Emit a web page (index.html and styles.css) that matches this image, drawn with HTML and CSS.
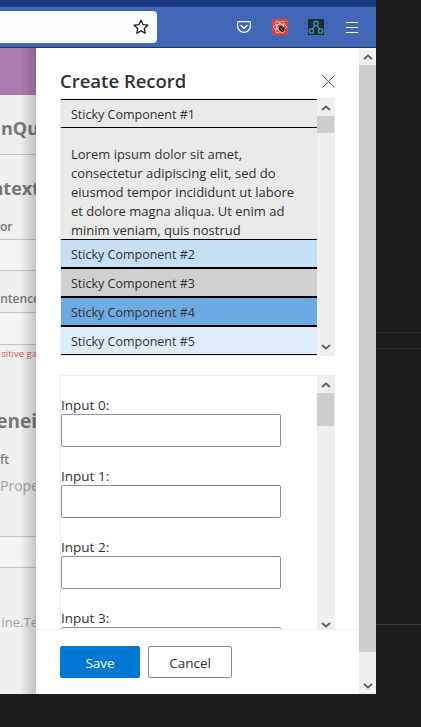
FILE: index.html
```html
<!DOCTYPE html>
<html lang="en">
<head>
<meta charset="utf-8">
<title>Create Record</title>
<link rel="stylesheet" href="styles.css">
</head>
<body>
<div class="screen">
  <div class="left">
    <div class="browser">
      <div class="tabstrip"></div>
      <div class="toolbar">
        <div class="urlbar">
          <svg class="star" viewBox="0 0 16 16" width="16" height="16"><path d="M8 1.2l2 4.400 4.800.6-3.500 3.300.9 4.800L8 11.900l-4.200 2.400.9-4.800L1.200 6.200 6 5.600z" fill="none" stroke="#1c1b22" stroke-width="1.300" stroke-linejoin="round"/></svg>
        </div>
        <svg class="pocket" viewBox="0 0 14 12" width="14" height="12"><path d="M1.500.6h11c.5 0 .9.400.9.900v3.700c0 3.300-2.900 6.200-6.400 6.200S.6 8.500.6 5.200V1.500c0-.5.400-.9.900-.9z" fill="none" stroke="#fff" stroke-width="1.200"/><path d="M4 4.500l3 2.800 3-2.800" fill="none" stroke="#fff" stroke-width="1.300" stroke-linecap="round"/></svg>
        <svg class="ext-red" viewBox="0 0 16 16" width="16" height="16"><rect width="16" height="16" fill="#d9473a"/><g fill="none" stroke="#fbe4e0" stroke-width="1" stroke-dasharray="1.400 .7"><ellipse cx="8" cy="8" rx="6.500" ry="2.800"/><ellipse cx="8" cy="8" rx="6.500" ry="2.800" transform="rotate(60 8 8)"/><ellipse cx="8" cy="8" rx="6.500" ry="2.800" transform="rotate(120 8 8)"/></g><ellipse cx="9.800" cy="10" rx="3" ry="2.600" fill="#1d1614" transform="rotate(35 9.800 10)"/><path d="M8 8.700l3 3.400M9.700 7.900l3 3.400" stroke="#d9847a" stroke-width=".6"/></svg>
        <svg class="ext-dark" viewBox="0 0 16 16" width="16" height="16"><rect width="16" height="16" fill="#1d2b38"/><g fill="none" stroke="#3f9bb0" stroke-width="1.300"><circle cx="8" cy="4.400" r="2.200"/><circle cx="3.400" cy="12" r="2.200"/><circle cx="12.600" cy="12" r="2.200"/><path d="M7 6.400l-2.500 3.700M9 6.400l2.500 3.700"/></g></svg>
        <div class="hamburger"><span></span><span></span><span></span></div>
      </div>
      <div class="viewport">
        <div class="backdrop">
          <div class="bd-hero"></div>
          <div class="bd-text bd-t1"><span class="bd-in">nQu</span></div>
          <div class="bd-rule"></div>
          <div class="bd-text bd-t2"><span class="bd-in">ntext</span></div>
          <div class="bd-text bd-t3">or</div>
          <div class="bd-field bd-f1"></div>
          <div class="bd-text bd-t4"><span class="bd-in">ntence</span></div>
          <div class="bd-field bd-f2"></div>
          <div class="bd-text bd-t5"><span class="bd-in">sitive ga</span></div>
          <div class="bd-text bd-t6"><span class="bd-in">enei</span></div>
          <div class="bd-text bd-t7">ft</div>
          <div class="bd-text bd-t8"><span class="bd-in">Prope</span></div>
          <div class="bd-field bd-f1"></div>
          <div class="bd-text bd-t9"><span class="bd-in">ine.Te</span></div>
        </div>
        <div class="panel">
          <div class="panel-body">
            <div class="panel-head">
              <h1 class="title">Create Record</h1>
              <svg class="close" viewBox="0 0 13 13" width="13" height="13"><path d="M.5.500l12 12M12.500.500l-12 12" stroke="#555" stroke-width="1" fill="none"/></svg>
            </div>
            <div class="box sticky-box">
              <div class="box-content">
                <div class="sticky s1">Sticky Component #1</div>
                <div class="lorem">Lorem ipsum dolor sit amet,<br>consectetur adipiscing elit, sed do<br>eiusmod tempor incididunt ut labore<br>et dolore magna aliqua. Ut enim ad<br>minim veniam, quis nostrud</div>
                <div class="sticky s2">Sticky Component #2</div>
                <div class="sticky s3">Sticky Component #3</div>
                <div class="sticky s4">Sticky Component #4</div>
                <div class="sticky s5">Sticky Component #5</div>
              </div>
              <div class="scrollbar">
                <div class="sb-btn"><svg viewBox="0 0 10 6" width="10" height="6"><path d="M1 5l4-3.500L9 5" class="chev"/></svg></div>
                <div class="sb-thumb thumb-a"></div>
                <div class="sb-track"></div>
                <div class="sb-btn"><svg viewBox="0 0 10 6" width="10" height="6"><path d="M1 1l4 3.500L9 1" class="chev"/></svg></div>
              </div>
            </div>
            <div class="box form-box">
              <div class="box-content form-content">
                <div class="field"><label class="field-label">Input 0:</label><input class="field-input" type="text"></div>
                <div class="field"><label class="field-label">Input 1:</label><input class="field-input" type="text"></div>
                <div class="field"><label class="field-label">Input 2:</label><input class="field-input" type="text"></div>
                <div class="field"><label class="field-label">Input 3:</label><input class="field-input" type="text"></div>
              </div>
              <div class="scrollbar">
                <div class="sb-btn"><svg viewBox="0 0 10 6" width="10" height="6"><path d="M1 5l4-3.500L9 5" class="chev"/></svg></div>
                <div class="sb-thumb thumb-b"></div>
                <div class="sb-track"></div>
                <div class="sb-btn"><svg viewBox="0 0 10 6" width="10" height="6"><path d="M1 1l4 3.500L9 1" class="chev"/></svg></div>
              </div>
            </div>
          </div>
          <div class="panel-foot">
            <button class="btn btn-primary" type="button">Save</button>
            <button class="btn btn-default" type="button">Cancel</button>
          </div>
        </div>
        <div class="scrollbar page-bar">
          <div class="sb-btn"><svg viewBox="0 0 10 6" width="10" height="6"><path d="M1 5l4-3.500L9 5" class="chev"/></svg></div>
          <div class="sb-thumb thumb-c"></div>
          <div class="sb-track"></div>
          <div class="sb-btn"><svg viewBox="0 0 10 6" width="10" height="6"><path d="M1 1l4 3.500L9 1" class="chev"/></svg></div>
        </div>
      </div>
    </div>
    <div class="bottom-dark"></div>
  </div>
  <div class="right">
    <div class="line line-a"></div>
    <div class="line line-b"></div>
    <div class="line line-c"></div>
  </div>
</div>
</body>
</html>
```

FILE: styles.css
```css
* { box-sizing: border-box; }
html, body { margin: 0; padding: 0; background: #1e1e1e; }
body { font-family: "Open Sans", "Noto Sans", sans-serif; color: #323130; }
.screen { display: flex; width: 421px; height: 727px; overflow: hidden; }
.left { width: 376px; display: flex; flex-direction: column; }
.right { width: 45px; background: #1e1e1e; }
.line { height: 1px; }
.line-a { margin-top: 332px; background: #2a2a2a; }
.line-b { margin-top: 15px; background: #2a2a2a; }
.line-c { margin-top: 275px; background: #3d3d3d; }
.browser { height: 694px; display: flex; flex-direction: column; }
.bottom-dark { flex: 1; background: #1e1e1e; }

.tabstrip { height: 7px; background: #163881; }
.toolbar { height: 41px; background: #3f67b5; border-bottom: 1px solid #1d3565; display: flex; align-items: flex-start; }
.urlbar { width: 157px; height: 32px; margin-top: 4px; background: #fbfbfe; border-radius: 0 4px 4px 0; display: flex; align-items: center; justify-content: flex-end; padding-right: 8px; }
.star { display: block; }
.pocket { margin: 14px 0 0 80px; flex: none; }
.ext-red { margin: 12px 0 0 21px; flex: none; }
.ext-dark { margin: 12px 0 0 20px; flex: none; }
.hamburger { margin: 15px 0 0 22px; width: 12px; display: flex; flex-direction: column; gap: 4px; }
.hamburger span { display: block; height: 1px; background: #fff; }

.viewport { flex: 1; display: flex; min-height: 0; }

.backdrop { width: 36px; flex: none; position: relative; background: #efefef; overflow: hidden; display: flex; flex-direction: column; }
.backdrop::after { content: ""; position: absolute; inset: 0; background: linear-gradient(to right, rgba(0,0,0,0) 55%, rgba(0,0,0,.19) 100%); }
.bd-hero { height: 47px; flex: none; background: #ad7cae; }
.bd-text { display: flex; justify-content: flex-end; white-space: nowrap; height: 20px; line-height: 20px; flex: none; color: #777; }
.bd-in { flex: none; }
.bd-rule { height: 1px; flex: none; background: #c4c4c4; }
.bd-t1 { margin-top: 23px; margin-bottom: 16px; font-size: 18px; font-weight: 700; }
.bd-t1 .bd-in { margin-right: -3px; }
.bd-t2 { margin-top: 23px; font-size: 18px; font-weight: 700; }
.bd-t2 .bd-in { margin-right: -4px; }
.bd-t3 { margin-top: 19px; margin-bottom: 2px; font-size: 12px; font-weight: 600; justify-content: flex-start; }
.bd-t4 { margin-top: 18px; margin-bottom: 3px; font-size: 12px; font-weight: 600; }
.bd-t4 .bd-in { margin-right: -4px; }
.bd-t5 { height: 16px; line-height: 16px; margin-top: 1px; margin-bottom: 27px; font-size: 9.500px; color: #d0605a; }
.bd-t5 .bd-in { margin-right: -1px; }
.bd-t6 { margin-top: 22px; font-size: 19px; font-weight: 700; }
.bd-t6 .bd-in { margin-right: -1px; }
.bd-t7 { margin-top: 19px; font-size: 12px; font-weight: 600; justify-content: flex-start; }
.bd-t8 { margin-top: 6px; margin-bottom: 40px; font-size: 14px; color: #a3a3a3; }
.bd-t8 .bd-in { margin-right: -3px; }
.bd-t9 { margin-top: 44px; font-size: 13px; color: #a3a3a3; }
.bd-t9 .bd-in { margin-right: -2px; }
.bd-field { flex: none; background: #f4f4f4; border-top: 1px solid #c4c4c4; border-bottom: 1px solid #c4c4c4; }
.bd-f1 { height: 32px; }
.bd-f2 { height: 33px; }

.panel { width: 323px; flex: none; background: #fff; display: flex; flex-direction: column; min-height: 0; }
.panel-body { flex: 1; min-height: 0; overflow: hidden; padding: 0 24px; }
.panel-head { height: 50px; display: flex; align-items: flex-start; justify-content: space-between; }
.title { margin: 19px 0 0; font-size: 18.500px; line-height: 28px; font-weight: 600; color: #323130; }
.close { margin-top: 27px; flex: none; }

.box { width: 275px; border: 1px solid #eee; display: flex; overflow: hidden; }
.box-content { flex: 1; min-width: 0; overflow: hidden; }
.sticky-box { height: 258px; }
.form-box { height: 259px; margin-top: 19px; }

.sticky { height: 29px; border-top: 1px solid #000; border-bottom: 1px solid #000; padding: 1px 0 0 10px; font-size: 12.500px; line-height: 27px; color: #323130; }
.s1 { background: #e9e9e9; }
.s2 { background: #c7dff4; }
.s3 { background: #d0d0d0; }
.s4 { background: #6daae2; }
.s5 { background: #deebf8; }
.lorem { height: 111px; background: #e9e9e9; padding: 17px 0 0 10px; font-size: 13px; line-height: 19px; overflow: hidden; white-space: nowrap; }

.form-content { padding-top: 19px; }
.field { height: 71px; }
.field-label { display: block; height: 19px; padding-top: 1px; font-size: 13.500px; line-height: 19px; color: #323130; }
.field-input { display: block; width: 220px; height: 33px; padding: 0 8px; background: #fff; border: 1px solid #8f8da3; border-radius: 2px; outline: 0; }

.scrollbar { width: 17px; flex: none; display: flex; flex-direction: column; background: #efefef; }
.sb-btn { height: 17px; flex: none; display: flex; align-items: center; justify-content: center; }
.chev { fill: none; stroke: #606060; stroke-width: 1.800; }
.sb-thumb { flex: none; background: #cdcdcd; }
.sb-track { flex: 1; }
.thumb-a { height: 17px; }
.thumb-b { height: 33px; }
.thumb-c { height: 587px; }

.panel-foot { height: 65px; flex: none; border-top: 1px solid #eee; padding: 16px 24px; display: flex; gap: 8px; background: #fff; }
.btn { height: 32px; border-radius: 2px; font-family: inherit; font-size: 13.500px; line-height: 28px; padding: 2px 0 0; cursor: pointer; }
.btn-primary { width: 80px; background: #0078d4; border: 1px solid #0078d4; color: #fff; font-weight: 500; }
.btn-default { width: 84px; background: #fff; border: 1px solid #8a8886; color: #323130; font-weight: 400; }
```
